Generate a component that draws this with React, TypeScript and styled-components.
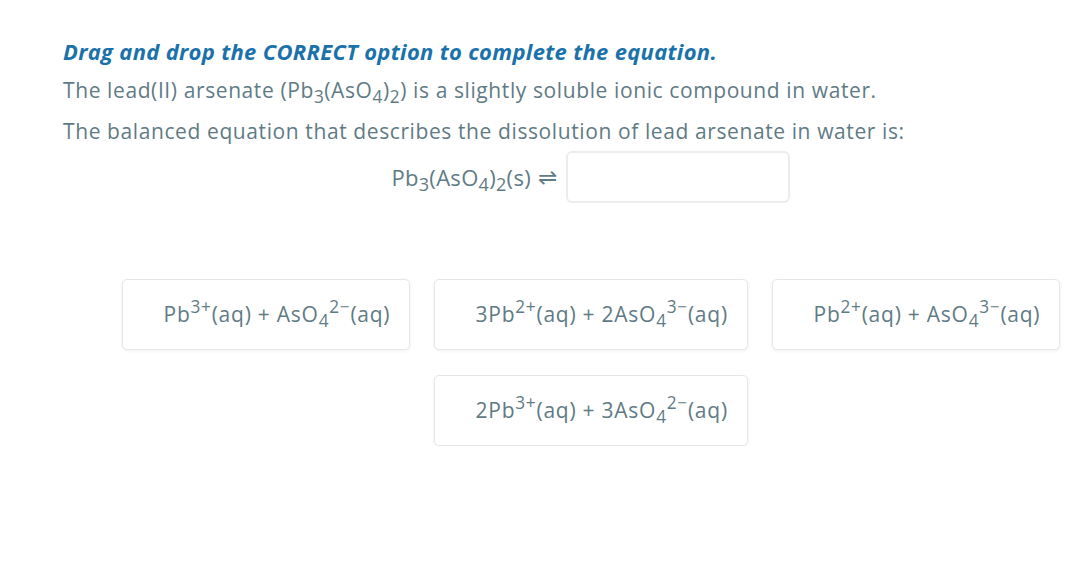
import React from "react";
import styled, { createGlobalStyle } from "styled-components";

const GlobalStyle = createGlobalStyle`
  html, body {
    margin: 0;
    padding: 0;
    background: #ffffff;
    overflow: hidden;
  }
  body {
    font-family: "Open Sans", "Noto Sans", sans-serif;
  }
`;

const Page = styled.div`
  width: 1055px;
  padding: 36px 0 0 63px;
  box-sizing: content-box;
  color: #5f7b85;
`;

const Title = styled.h2`
  margin: 0 0 6px;
  font-size: 22px;
  line-height: 30px;
  font-weight: 700;
  font-style: italic;
  color: #1b72aa;
  letter-spacing: 0.3px;
`;

const Line = styled.p`
  margin: 0;
  font-size: 21px;
  line-height: 36px;
  letter-spacing: 0.6px;

  & + & {
    margin-top: 5px;
  }
`;

const Sub = styled.sub`
  font-size: 0.82em;
  vertical-align: -0.3em;
  line-height: 0;
`;

const Sup = styled.sup`
  font-size: 0.82em;
  vertical-align: 0.5em;
  line-height: 0;
`;

const EquationRow = styled.div`
  display: flex;
  justify-content: center;
  align-items: center;
  gap: 7px;
  margin-top: 2px;
  font-size: 22px;
  letter-spacing: 0.3px;
`;

const Arrow = styled.span`
  font-family: "DejaVu Sans", sans-serif;
  font-size: 23px;
  margin-right: 1px;
`;

const DropBox = styled.div`
  flex: none;
  width: 220px;
  height: 48px;
  border: 2px solid #ececec;
  border-radius: 6px;
`;

const Options = styled.div`
  display: flex;
  flex-wrap: wrap;
  justify-content: center;
  gap: 25px 24px;
  margin-top: 76px;
`;

const Card = styled.div<{ $w: number }>`
  width: ${(p) => p.$w}px;
  height: 71px;
  box-sizing: border-box;
  display: flex;
  align-items: center;
  padding: 0 0 2px 41px;
  border: 1px solid #e6e6e6;
  border-radius: 5px;
  background: #fff;
  box-shadow: 0 1px 4px rgba(0, 0, 0, 0.06);
  font-size: 21px;
  letter-spacing: 0.75px;
  white-space: nowrap;
`;

const Formula = styled.span`
  display: inline-block;
  line-height: 30px;
`;

type Opt = { w: number; node: React.ReactNode };

const options: Opt[] = [
  {
    w: 288,
    node: (
      <>
        Pb<Sup>3+</Sup>(aq) + AsO<Sub>4</Sub>
        <Sup>2−</Sup>(aq)
      </>
    ),
  },
  {
    w: 314,
    node: (
      <>
        3Pb<Sup>2+</Sup>(aq) + 2AsO<Sub>4</Sub>
        <Sup>3−</Sup>(aq)
      </>
    ),
  },
  {
    w: 288,
    node: (
      <>
        Pb<Sup>2+</Sup>(aq) + AsO<Sub>4</Sub>
        <Sup>3−</Sup>(aq)
      </>
    ),
  },
  {
    w: 314,
    node: (
      <>
        2Pb<Sup>3+</Sup>(aq) + 3AsO<Sub>4</Sub>
        <Sup>2−</Sup>(aq)
      </>
    ),
  },
];

export default function App() {
  return (
    <>
      <GlobalStyle />
      <Page>
        <Title>Drag and drop the CORRECT option to complete the equation.</Title>
        <Line>
          The lead(II) arsenate (Pb<Sub>3</Sub>(AsO<Sub>4</Sub>)<Sub>2</Sub>) is a slightly
          soluble ionic compound in water.
        </Line>
        <Line>The balanced equation that describes the dissolution of lead arsenate in water is:</Line>
        <EquationRow>
          <Formula>
            Pb<Sub>3</Sub>(AsO<Sub>4</Sub>)<Sub>2</Sub>(s)
          </Formula>
          <Arrow>⇌</Arrow>
          <DropBox />
        </EquationRow>
        <Options>
          {options.map((o, i) => (
            <Card key={i} $w={o.w}>
              <Formula>{o.node}</Formula>
            </Card>
          ))}
        </Options>
      </Page>
    </>
  );
}
